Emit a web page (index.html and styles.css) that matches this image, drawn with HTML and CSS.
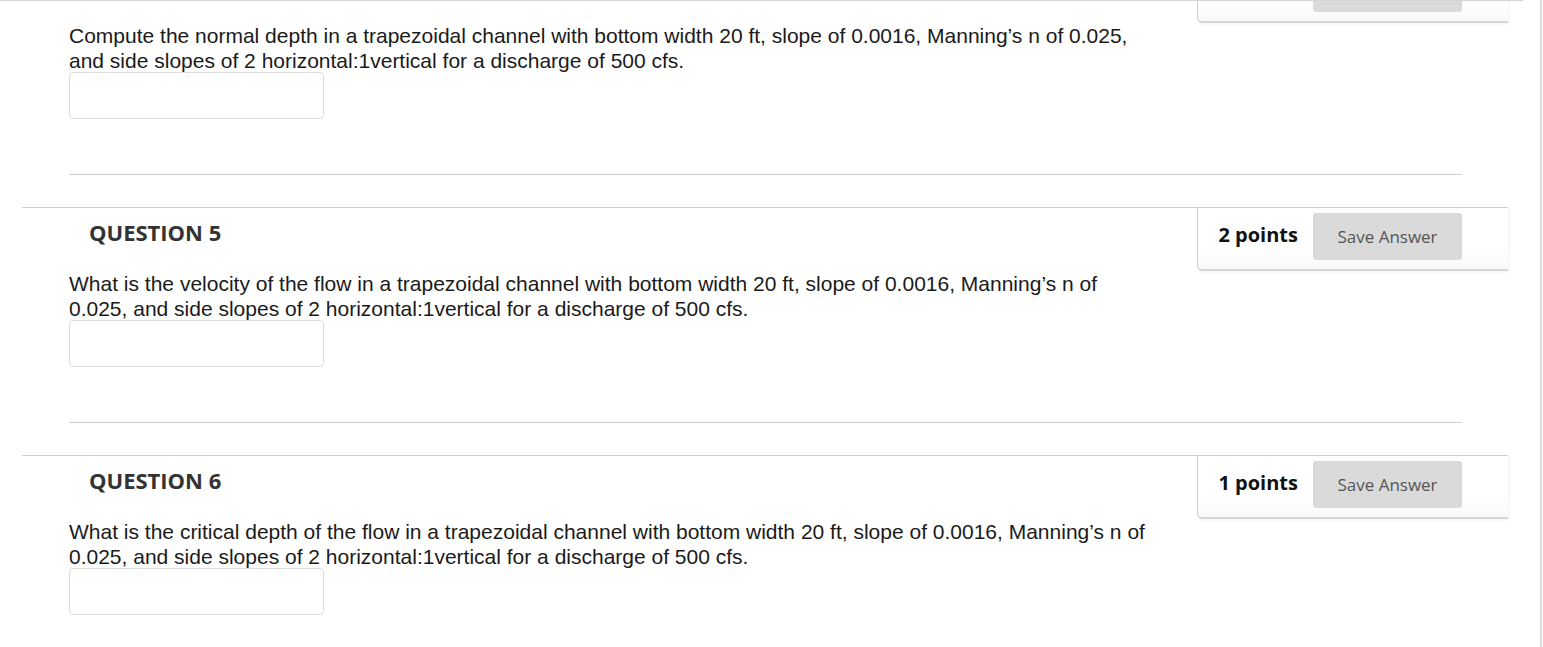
FILE: index.html
```html
<!DOCTYPE html>
<html lang="en">
<head>
<meta charset="utf-8">
<title>Quiz</title>
<link rel="stylesheet" href="styles.css">
</head>
<body>
<div class="top-rule"></div>
<div class="page">
  <div class="questions">
    <section class="question">
      <div class="q-head">
        <h3 class="q-title">QUESTION 4</h3>
        <div class="points-box">
          <span class="points">2 points</span>
          <button class="save-btn" type="button">Save Answer</button>
        </div>
      </div>
      <div class="q-body">
        <p class="q-text">Compute the normal depth in a trapezoidal channel with bottom width 20 ft, slope of 0.0016, Manning’s n of 0.025,<br>and side slopes of 2 horizontal:1vertical for a discharge of 500 cfs.</p>
        <input class="answer" type="text" aria-label="Answer">
      </div>
      <hr class="q-sep">
    </section>
    <section class="question">
      <div class="q-head">
        <h3 class="q-title">QUESTION 5</h3>
        <div class="points-box">
          <span class="points">2 points</span>
          <button class="save-btn" type="button">Save Answer</button>
        </div>
      </div>
      <div class="q-body">
        <p class="q-text">What is the velocity of the flow in a trapezoidal channel with bottom width 20 ft, slope of 0.0016, Manning’s n of<br>0.025, and side slopes of 2 horizontal:1vertical for a discharge of 500 cfs.</p>
        <input class="answer" type="text" aria-label="Answer">
      </div>
      <hr class="q-sep">
    </section>
    <section class="question">
      <div class="q-head">
        <h3 class="q-title">QUESTION 6</h3>
        <div class="points-box">
          <span class="points">1 points</span>
          <button class="save-btn" type="button">Save Answer</button>
        </div>
      </div>
      <div class="q-body">
        <p class="q-text">What is the critical depth of the flow in a trapezoidal channel with bottom width 20 ft, slope of 0.0016, Manning’s n of<br>0.025, and side slopes of 2 horizontal:1vertical for a discharge of 500 cfs.</p>
        <input class="answer" type="text" aria-label="Answer">
      </div>
      <hr class="q-sep">
    </section>
  </div>
</div>
</body>
</html>
```

FILE: styles.css
```css
html, body {
  margin: 0;
  padding: 0;
  background: #fff;
}
body {
  height: 647px;
  overflow: hidden;
  position: relative;
}
.top-rule {
  position: absolute;
  top: 0;
  left: 0;
  width: 1523px;
  height: 0;
  border-top: 1px solid #d4d4d4;
  z-index: 5;
}
.page {
  display: flow-root;
  width: 1540px;
  height: 647px;
  border-right: 2px solid #dcdcdc;
  box-sizing: content-box;
}
.questions {
  margin-top: -41px;
  padding-left: 22px;
  width: 1486px;
}
.question {
  border-top: 1px solid #cfcfcf;
}
.q-head {
  display: flex;
  justify-content: space-between;
  align-items: flex-start;
  height: 63px;
}
.q-title {
  margin: 0;
  padding: 10px 0 0 67px;
  font-family: "Open Sans", sans-serif;
  font-weight: 700;
  font-size: 22px;
  line-height: 28px;
  color: #333;
}
.points-box {
  display: flex;
  align-items: center;
  gap: 15px;
  box-sizing: border-box;
  height: 63px;
  padding: 0 46px 4px 20px;
  border-left: 1px solid #cfcfcf;
  border-bottom: 2px solid #d6d6d6;
  border-bottom-left-radius: 5px;
  background: linear-gradient(to bottom, #fff 0%, #fff 70%, #f8f8f8 100%);
  box-shadow: 1px 1px 3px rgba(0, 0, 0, 0.06);
}
.points {
  font-family: "Open Sans", sans-serif;
  font-weight: 700;
  font-size: 20px;
  line-height: 26px;
  margin-top: -3px;
  color: #111;
}
.save-btn {
  width: 149px;
  height: 47px;
  border: 0;
  border-radius: 3px;
  background: #dadada;
  color: #555;
  font-family: "Open Sans", sans-serif;
  font-size: 17px;
  padding: 0;
}
.q-body {
  padding-left: 47px;
}
.q-text {
  margin: 0;
  font-family: "Liberation Sans", Arial, sans-serif;
  font-size: 21px;
  line-height: 25px;
  color: #1a1a1a;
}
.answer {
  display: block;
  box-sizing: border-box;
  width: 255px;
  height: 47px;
  margin: -1px 0 0;
  border: 1px solid #dddddd;
  border-radius: 4px;
  background: #fff;
}
.q-sep {
  margin: 55px 46px 32px 47px;
  border: 0;
  border-top: 1px solid #cfcfcf;
  height: 0;
}
```
